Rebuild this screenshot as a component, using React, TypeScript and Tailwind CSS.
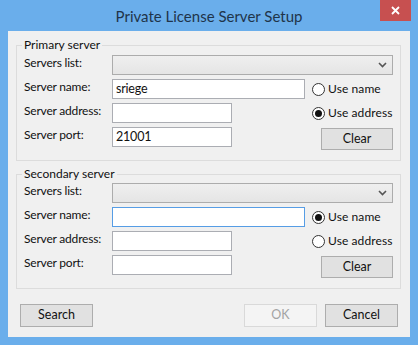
import { useState } from "react";

const font = { fontFamily: 'Lato, "Noto Sans", sans-serif' };

function Radio({ checked, label }: { checked: boolean; label: string }) {
  return (
    <div className="flex items-center h-[20px] pl-[7px]">
      <span className="w-[13px] h-[13px] rounded-full border border-[#333] bg-white flex items-center justify-center">
        {checked && <span className="w-[7px] h-[7px] rounded-full bg-[#111]" />}
      </span>
      <span className="ml-[3px] text-[12px] tracking-[0.1px] leading-[16px] text-[#111]">{label}</span>
    </div>
  );
}

function Select() {
  return (
    <div className="w-[281px] h-[20px] border border-[#acacac] bg-gradient-to-b from-[#efefef] to-[#e5e5e5] flex items-center justify-end pr-[5px]">
      <svg width="9" height="6" viewBox="0 0 9 6">
        <path d="M1 1l3.5 3.5L8 1" stroke="#555" strokeWidth="1.6" fill="none" />
      </svg>
    </div>
  );
}

function Input({ value, wide, focus }: { value?: string; wide?: boolean; focus?: boolean }) {
  return (
    <div
      className={`${wide ? "w-[193px]" : "w-[120px]"} h-[20px] border bg-white flex items-center px-[3px] text-[12.5px] text-[#111] ${
        focus ? "border-[#569de5]" : "border-[#abadb3]"
      }`}
    >
      {value}
    </div>
  );
}

function Btn({ label, disabled }: { label: string; disabled?: boolean }) {
  return (
    <button
      className={`w-[73px] h-[23px] border text-[12.5px] flex items-center justify-center ${
        disabled ? "border-[#d9d9d9] bg-[#f4f4f4] text-[#a3a3a3]" : "border-[#adadad] bg-[#e1e1e1] text-[#111]"
      }`}
    >
      {label}
    </button>
  );
}

function Group({
  title,
  name,
  useName,
  focus,
  mt,
  inner,
}: {
  title: string;
  name?: string;
  useName: boolean;
  focus?: boolean;
  mt: string;
  inner: string;
}) {
  const port = name ? "21001" : "";
  return (
    <fieldset className={`ml-[8px] w-[385px] border border-[#dcdcdc] pl-[7px] pb-[13px] ${mt}`}>
      <legend className="-ml-[2px] px-[2px] text-[12px] leading-[16px] text-[#111]">{title}</legend>
      <div
        className={`grid grid-cols-[88px_193px_1fr] gap-y-[4px] text-[12px] tracking-[-0.2px] leading-[16px] text-[#111] ${inner}`}
      >
        <span>Servers list:</span>
        <div className="col-span-2">
          <Select />
        </div>

        <span>Server name:</span>
        <Input value={name} wide focus={focus} />
        <Radio checked={useName} label="Use name" />

        <span>Server address:</span>
        <Input />
        <Radio checked={!useName} label="Use address" />

        <span>Server port:</span>
        <Input value={port} />
        <div className="pl-[16px] pt-[1px] h-[20px]">
          <button className="w-[72px] h-[22px] border border-[#adadad] bg-[#e1e1e1] text-[12.5px] tracking-normal text-[#111] flex items-center justify-center">
            Clear
          </button>
        </div>
      </div>
    </fieldset>
  );
}

export default function App() {
  const [open] = useState(true);
  if (!open) return null;

  return (
    <div className="w-[418px] h-[345px] bg-[#6aaeeb] flex flex-col" style={font}>
      {/* Title bar */}
      <div className="relative h-[31px] flex items-center justify-center">
        <span className="text-[15px] text-[#1f344a] mt-[1px]">Private License Server Setup</span>
        <div className="absolute top-0 right-[7px] w-[31px] h-[21px] bg-[#c75050] flex items-center justify-center">
          <svg width="9" height="9" viewBox="0 0 9 9">
            <path d="M1 1l7 7M8 1l-7 7" stroke="#fff" strokeWidth="1.8" />
          </svg>
        </div>
      </div>

      {/* Client */}
      <div className="mx-[8px] h-[306px] bg-[#f0f0f0] flex flex-col pt-[6px]">
        <Group title="Primary server" name="sriege" useName={false} mt="" inner="mt-[2px]" />
        <Group title="Secondary server" useName focus mt="mt-[5px]" inner="mt-[1px]" />

        <div className="flex items-center mt-[15px] px-[12px]">
          <Btn label="Search" />
          <div className="flex-1" />
          <Btn label="OK" disabled />
          <div className="w-[8px]" />
          <Btn label="Cancel" />
        </div>
      </div>
    </div>
  );
}
